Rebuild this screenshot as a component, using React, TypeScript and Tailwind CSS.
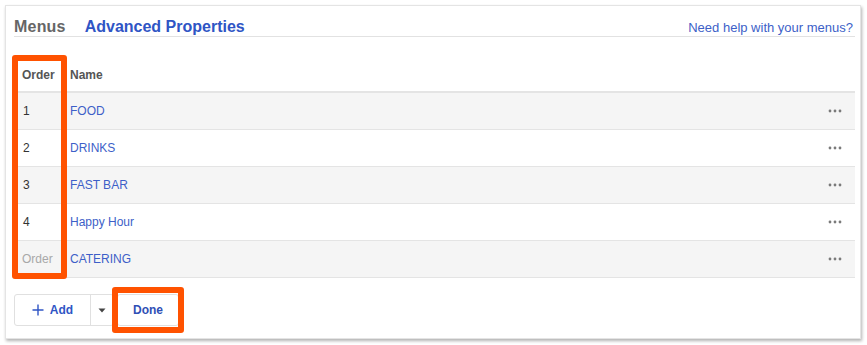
import React from "react";

const rows = [
  { order: "1", name: "FOOD" },
  { order: "2", name: "DRINKS" },
  { order: "3", name: "FAST BAR" },
  { order: "4", name: "Happy Hour" },
  { order: "", name: "CATERING" },
];

function Dots() {
  return (
    <svg width="14" height="4" viewBox="0 0 14 4" className="block">
      <circle cx="2" cy="2" r="1.4" fill="#7a7a7a" />
      <circle cx="7" cy="2" r="1.4" fill="#7a7a7a" />
      <circle cx="12" cy="2" r="1.4" fill="#7a7a7a" />
    </svg>
  );
}

export default function App() {
  return (
    <div
      className="w-[867px] h-[345px] bg-white pt-[5px] pl-[5px]"
      style={{ fontFamily: '"Liberation Sans", Arial, sans-serif' }}
    >
      <div className="w-[856px] h-[334px] bg-white border border-[#e4e4e4] shadow-[1px_2px_3px_rgba(0,0,0,0.3)] pl-[8px] pr-[5px]">
        {/* Header */}
        <div className="flex items-baseline h-[31px] pt-[9px] border-b border-[#e2e2e2]">
          <span className="text-[16px] font-bold text-[#666666] tracking-[0.2px]">Menus</span>
          <span className="ml-[19px] text-[16px] font-bold text-[#2f55c5]">
            Advanced Properties
          </span>
          <span className="ml-auto mr-[2px] text-[13px] text-[#3d5fc8]">
            Need help with your menus?
          </span>
        </div>

        {/* Table */}
        <div className="relative mt-[21px]">
          <div className="flex items-center h-[35px] border-b-2 border-[#e4e4e4] text-[12px] font-bold text-[#555555]">
            <div className="w-[48px] pl-[8px]">Order</div>
            <div className="pl-[8px]">Name</div>
          </div>
          {rows.map((r, i) => (
            <div
              key={r.name}
              className={`flex items-center h-[37px] border-b border-[#e4e4e4] text-[12px] ${
                i % 2 === 0 ? "bg-[#f5f5f5]" : "bg-white"
              }`}
            >
              <div className="w-[48px] pl-[9px]">
                {r.order ? (
                  <span className="text-[#333333]">{r.order}</span>
                ) : (
                  <span className="text-[#a8a8a8] ml-[-1px]">Order</span>
                )}
              </div>
              <div className="pl-[8px] text-[#3d5fc8]">{r.name}</div>
              <div className="ml-auto mr-[13px]">
                <Dots />
              </div>
            </div>
          ))}
          <div className="absolute left-[-2px] top-[-3px] w-[55px] bottom-[-1px] border-[6px] border-[#ff5200] rounded-[3px]" />
        </div>

        {/* Footer */}
        <div className="flex items-center mt-[16px]">
          <div className="flex h-[32px] border border-[#e0e0e0] rounded-[3px] bg-white">
            <button className="flex items-center w-[76px] justify-center gap-[6px] text-[12px] font-bold text-[#2f55c5] border-r border-[#e0e0e0]">
              <svg width="12" height="12" viewBox="0 0 12 12">
                <path d="M6 0.5V11.5M0.5 6H11.5" stroke="#2f55c5" strokeWidth="1.4" />
              </svg>
              Add
            </button>
            <button className="flex items-center justify-center w-[22px]">
              <svg width="8" height="5" viewBox="0 0 8 5">
                <path d="M0.5 0.5H7.5L4 4.5Z" fill="#444444" />
              </svg>
            </button>
          </div>
          <div className="relative ml-[3px]">
            <button className="h-[32px] w-[62px] border border-[#e0e0e0] rounded-[3px] bg-white text-[12px] font-bold text-[#2f4fb5]">
              Done
            </button>
            <div className="absolute left-[-5px] right-[-5px] top-[-7px] bottom-[-7px] border-[6px] border-[#ff5200] rounded-[3px]" />
          </div>
        </div>
      </div>
    </div>
  );
}
